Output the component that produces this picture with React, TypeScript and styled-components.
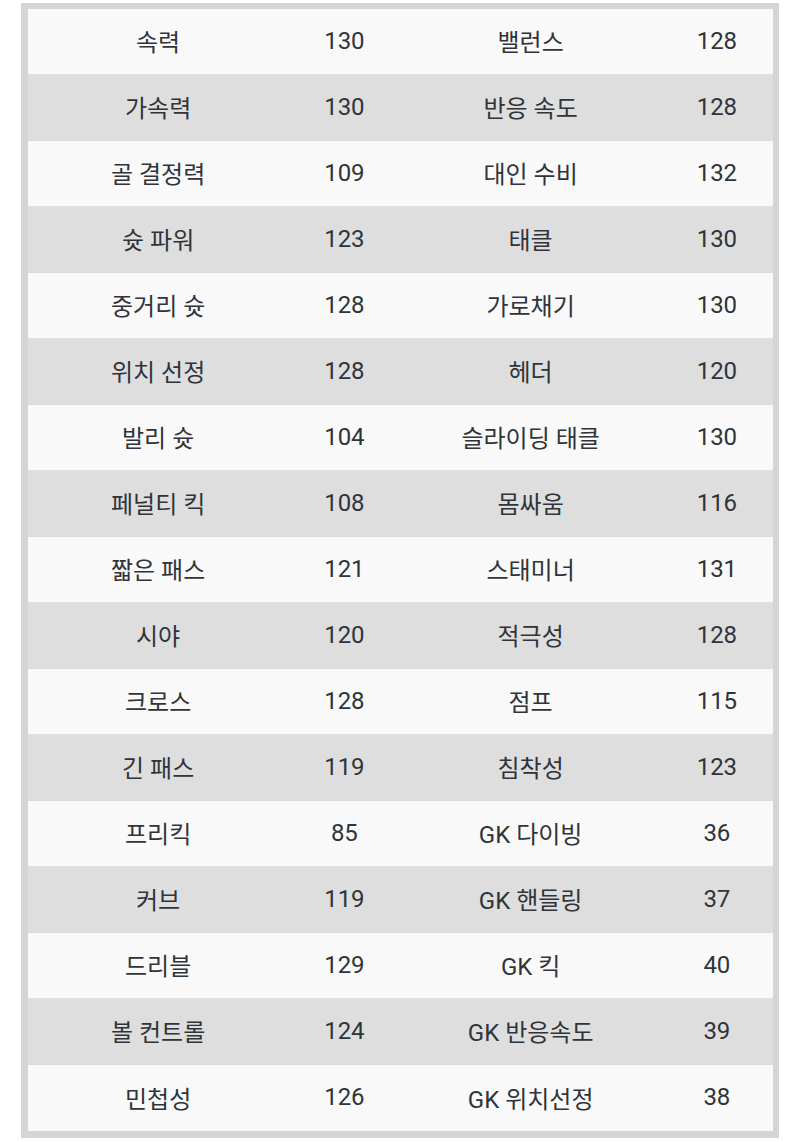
import styled, { createGlobalStyle } from 'styled-components';

const GlobalStyle = createGlobalStyle`
  html, body {
    margin: 0;
    padding: 0;
    background: #ffffff;
  }
  body {
    font-family: Roboto, "Noto Sans CJK KR", "Noto Sans", sans-serif;
  }
`;

type Stat = [string, number, string, number];

const stats: Stat[] = [
  ['속력', 130, '밸런스', 128],
  ['가속력', 130, '반응 속도', 128],
  ['골 결정력', 109, '대인 수비', 132],
  ['슛 파워', 123, '태클', 130],
  ['중거리 슛', 128, '가로채기', 130],
  ['위치 선정', 128, '헤더', 120],
  ['발리 슛', 104, '슬라이딩 태클', 130],
  ['페널티 킥', 108, '몸싸움', 116],
  ['짧은 패스', 121, '스태미너', 131],
  ['시야', 120, '적극성', 128],
  ['크로스', 128, '점프', 115],
  ['긴 패스', 119, '침착성', 123],
  ['프리킥', 85, 'GK 다이빙', 36],
  ['커브', 119, 'GK 핸들링', 37],
  ['드리블', 129, 'GK 킥', 40],
  ['볼 컨트롤', 124, 'GK 반응속도', 39],
  ['민첩성', 126, 'GK 위치선정', 38],
];

export default function App() {
  return (
    <>
      <GlobalStyle />
      <Page>
        <Frame>
          <StatTable>
            {stats.map((row, i) => (
              <Row key={row[0]} $striped={i % 2 === 1}>
                <Cell>{row[0]}</Cell>
                <Cell>{row[1]}</Cell>
                <Cell>{row[2]}</Cell>
                <Cell>{row[3]}</Cell>
              </Row>
            ))}
          </StatTable>
        </Frame>
      </Page>
    </>
  );
}

const Page = styled.div`
  padding: 3px 21px 3px 21px;
`;

const Frame = styled.div`
  width: 758px;
  box-sizing: border-box;
  padding: 6px 6px 7px 7px;
  background-color: #d5d5d5;
`;

const StatTable = styled.div`
  display: flex;
  flex-direction: column;
  overflow: hidden;
`;

const Row = styled.div<{ $striped: boolean }>`
  display: grid;
  grid-template-columns: repeat(4, minmax(0, 1fr));
  height: 66px;
  box-sizing: border-box;
  padding-bottom: 2px;
  background-color: ${(p) => (p.$striped ? '#dedede' : '#f9f9f9')};
  border-bottom: 1px solid ${(p) => (p.$striped ? '#dcdcdc' : '#e2e2e2')};

  &:last-child {
    border-bottom: none;
  }
`;

const Cell = styled.div`
  display: flex;
  align-items: center;
  justify-content: center;
  min-width: 0;
  padding-left: 74px;
  white-space: nowrap;
  color: #30343a;
  font-size: 24px;
  font-weight: 400;
`;
